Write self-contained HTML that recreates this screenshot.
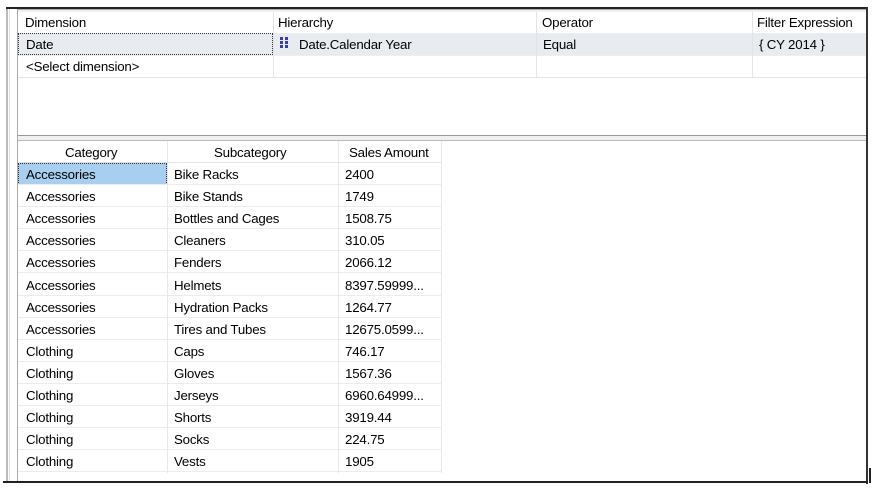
<!DOCTYPE html>
<html><head><style>
body{margin:0;width:883px;height:496px;background:#fff;position:relative;overflow:hidden;font-family:Tahoma,"Liberation Sans",sans-serif;font-size:13.3px;color:#000}
.a{position:absolute;box-sizing:border-box}
.t{position:absolute;white-space:nowrap;line-height:22px;letter-spacing:-0.2px}
</style></head><body>
<div class="a" style="left:6px;top:7px;width:862px;height:2px;background:#222"></div>
<div class="a" style="left:866px;top:7px;width:2px;height:477px;background:#333"></div>
<div class="a" style="left:3px;top:481px;width:865px;height:2px;background:#222"></div>
<div class="a" style="left:869px;top:468px;width:2px;height:15px;background:#222"></div>
<div class="a" style="left:6px;top:9px;width:2px;height:472px;background:#bbb"></div>
<div class="a" style="left:9px;top:9px;width:1px;height:472px;background:#ddd"></div>
<div class="a" style="left:17px;top:9px;width:1px;height:472px;background:#aaa"></div>
<div class="a" style="left:18px;top:9px;width:848px;height:3px;background:#f0f0f0;border-top:1px solid #aaa"></div>
<!-- upper grid -->
<div class="a" style="left:18px;top:33px;width:848px;height:22px;background:#e8ecf0"></div>
<div class="a" style="left:18px;top:33px;width:255px;height:22px;border:1px dotted #333"></div>
<div class="a" style="left:18px;top:77px;width:848px;height:1px;background:#e4e4e4"></div>
<div class="a" style="left:18px;top:55px;width:848px;height:1px;background:#eee"></div>
<div class="a" style="left:273px;top:12px;width:1px;height:66px;background:#e4e4e4"></div>
<div class="a" style="left:536px;top:12px;width:1px;height:66px;background:#e4e4e4"></div>
<div class="a" style="left:752px;top:12px;width:1px;height:66px;background:#e4e4e4"></div>
<div class="t" style="left:25px;top:12px">Dimension</div>
<div class="t" style="left:278px;top:12px">Hierarchy</div>
<div class="t" style="left:542px;top:12px">Operator</div>
<div class="t" style="left:757px;top:12px">Filter Expression</div>
<div class="t" style="left:26px;top:34px">Date</div>
<svg class="a" style="left:280px;top:37px" width="9" height="13"><g fill="#3a3aa8"><rect x="0" y="0" width="3" height="3"/><rect x="5" y="0" width="3" height="3"/><rect x="0" y="4" width="3" height="3"/><rect x="5" y="4" width="3" height="3"/><rect x="0" y="8" width="3" height="3"/><rect x="5" y="8" width="3" height="3"/></g></svg>
<div class="t" style="left:299px;top:34px">Date.Calendar Year</div>
<div class="t" style="left:543px;top:34px">Equal</div>
<div class="t" style="left:759px;top:34px">{ CY 2014 }</div>
<div class="t" style="left:26px;top:56px">&lt;Select dimension&gt;</div>
<!-- separator -->
<div class="a" style="left:18px;top:135px;width:848px;height:1px;background:#999"></div>
<div class="a" style="left:18px;top:136px;width:848px;height:4px;background:#f0f0f0"></div>
<div class="a" style="left:18px;top:140px;width:848px;height:1px;background:#bbb"></div>
<!-- lower grid -->
<div class="a" style="left:18px;top:163px;width:149px;height:22px;background:#a8cff0;border:1px dotted #333"></div>
<div id="g"></div>
<div class="a" style="left:18px;top:141px;width:424px;height:22px;border-bottom:1px solid #e4e4e4;border-right:1px solid #e4e4e4"></div>
<div class="a" style="left:167px;top:141px;width:1px;height:332px;background:#e8e8e8"></div>
<div class="a" style="left:338px;top:141px;width:1px;height:332px;background:#e8e8e8"></div>
<div class="a" style="left:441px;top:141px;width:1px;height:332px;background:#e8e8e8"></div>
<div class="t" style="left:65px;top:142px">Category</div>
<div class="t" style="left:214px;top:142px">Subcategory</div>
<div class="t" style="left:349px;top:142px">Sales Amount</div>
<script>
var d=[["Accessories","Bike Racks","2400"],["Accessories","Bike Stands","1749"],["Accessories","Bottles and Cages","1508.75"],["Accessories","Cleaners","310.05"],["Accessories","Fenders","2066.12"],["Accessories","Helmets","8397.59999..."],["Accessories","Hydration Packs","1264.77"],["Accessories","Tires and Tubes","12675.0599..."],["Clothing","Caps","746.17"],["Clothing","Gloves","1567.36"],["Clothing","Jerseys","6960.64999..."],["Clothing","Shorts","3919.44"],["Clothing","Socks","224.75"],["Clothing","Vests","1905"]];
var h="";d.forEach(function(r,i){var y=163+i*22.1;
h+='<div class="a" style="left:18px;top:'+(y+21)+'px;width:424px;height:1px;background:#ececec"></div>';
h+='<div class="t" style="left:26px;top:'+(y+1)+'px">'+r[0]+'</div><div class="t" style="left:174px;top:'+(y+1)+'px">'+r[1]+'</div><div class="t" style="left:345px;top:'+(y+1)+'px">'+r[2]+'</div>';});
document.getElementById("g").outerHTML=h;
</script>
</body></html>
